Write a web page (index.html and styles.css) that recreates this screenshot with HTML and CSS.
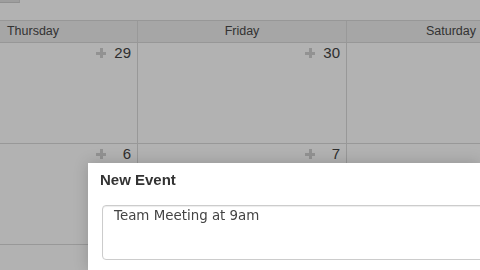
FILE: index.html
```html
<!DOCTYPE html>
<html>
<head>
<meta charset="utf-8">
<link rel="stylesheet" href="styles.css">
</head>
<body>
<div class="page">
  <div class="toolbar"><div class="btn"></div></div>
  <div class="calendar">
    <div class="head">
      <div class="hcell">Thursday</div>
      <div class="hcell">Friday</div>
      <div class="hcell">Saturday</div>
    </div>
    <div class="week">
      <div class="cell"><div class="daytop"><span class="plus"></span><span class="num">29</span></div></div>
      <div class="cell"><div class="daytop"><span class="plus"></span><span class="num">30</span></div></div>
      <div class="cell"></div>
    </div>
    <div class="week">
      <div class="cell"><div class="daytop"><span class="plus"></span><span class="num">6</span></div></div>
      <div class="cell"><div class="daytop"><span class="plus"></span><span class="num">7</span></div></div>
      <div class="cell"></div>
    </div>
  </div>
</div>
<div class="backdrop"></div>
<div class="modal">
  <div class="modal-title">New Event</div>
  <div class="modal-body">
    <div class="textarea">Team Meeting at 9am</div>
  </div>
</div>
</body>
</html>
```
FILE: styles.css
```css
html, body {
  margin: 0;
  padding: 0;
  width: 480px;
  height: 270px;
  overflow: hidden;
  background: #fff;
  font-family: "Liberation Sans", Arial, sans-serif;
}
.page {
  width: 480px;
  height: 270px;
  overflow: hidden;
}
.toolbar {
  height: 20px;
}
.btn {
  width: 19px;
  height: 2px;
  background: #e2e2e2;
  border-bottom: 1px solid #cfcfcf;
  border-right: 1px solid #d5d5d5;
}
.calendar {
  margin-left: -72px;
  width: 627px;
}
.head {
  display: grid;
  grid-template-columns: 209px 209px 209px;
  background: #eee;
  border-top: 1px solid #d8d8d8;
  border-bottom: 1px solid #d8d8d8;
}
.hcell {
  height: 21px;
  line-height: 21px;
  text-align: center;
  font-size: 12.5px;
  color: #4a4a4a;
  border-left: 1px solid #dcdcdc;
}
.week {
  display: grid;
  grid-template-columns: 209px 209px 209px;
  border-bottom: 1px solid #dadada;
}
.cell {
  height: 100px;
  border-left: 1px solid #dadada;
}
.daytop {
  display: flex;
  justify-content: flex-end;
  align-items: center;
  gap: 7px;
  padding: 1px 6px 0 0;
  height: 17px;
}
.plus {
  width: 10px;
  height: 10px;
  position: relative;
  margin-top: 1px;
}
.plus::before, .plus::after {
  content: "";
  position: absolute;
  background: #d2d2d2;
}
.plus::before {
  left: 3.5px;
  top: 0;
  width: 3px;
  height: 10px;
}
.plus::after {
  left: 0;
  top: 3.5px;
  width: 10px;
  height: 3px;
}
.num {
  width: 18px;
  text-align: right;
  font-size: 15px;
  color: #444;
}
.backdrop {
  position: fixed;
  left: 0;
  top: 0;
  right: 0;
  bottom: 0;
  background: rgba(0, 0, 0, 0.3);
}
.modal {
  position: absolute;
  left: 88px;
  top: 163px;
  right: 0;
  bottom: 0;
  background: #fff;
  box-shadow: 0 0 14px rgba(0, 0, 0, 0.18);
}
.modal-title {
  padding: 8px 0 0 12px;
  font-size: 15px;
  font-weight: bold;
  line-height: 18px;
  color: #333;
}
.modal-body {
  padding: 16px 0 0 14px;
}
.textarea {
  box-sizing: border-box;
  height: 55px;
  margin-right: -10px;
  border: 1px solid #ccc;
  border-radius: 4px;
  box-shadow: inset 0 1px 1px rgba(0, 0, 0, 0.075);
  padding: 2px 11px;
  font-family: "DejaVu Sans", Verdana, sans-serif;
  font-size: 13.4px;
  line-height: 16px;
  color: #444;
}
```
